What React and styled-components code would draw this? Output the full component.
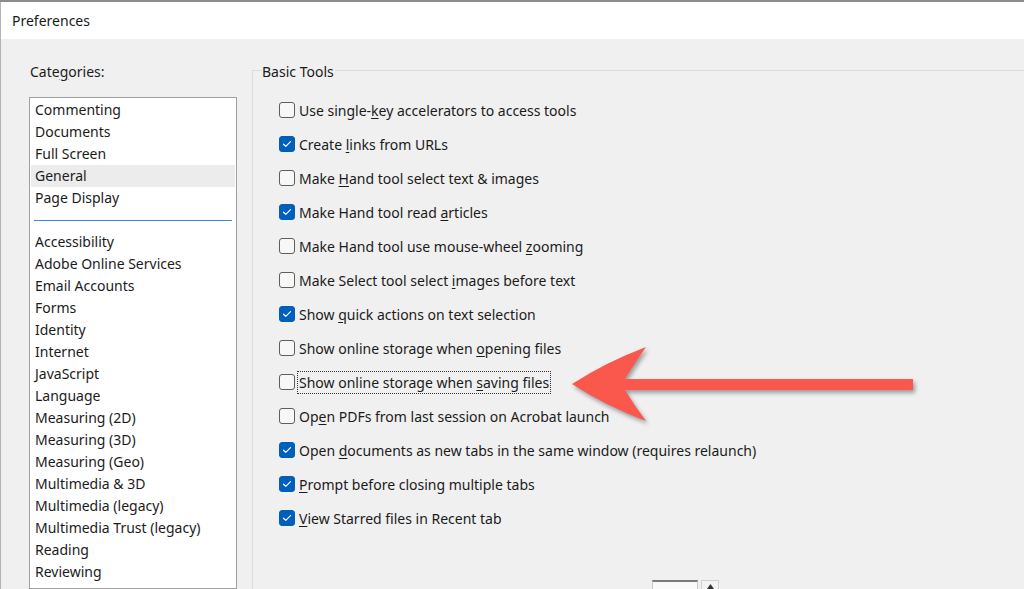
import { createGlobalStyle } from 'styled-components';
import styled from 'styled-components';

const GlobalStyle = createGlobalStyle`
  html, body {
    margin: 0;
    padding: 0;
    background: #f0f0f0;
  }
  body {
    font-family: "Noto Sans", "Open Sans", sans-serif;
    color: #1b1b1b;
  }
`;

const Window = styled.div`
  position: relative;
  width: 1024px;
  height: 589px;
  overflow: hidden;
  box-sizing: border-box;
  border-top: 2px solid #8c8c8c;
  box-shadow: inset 1px 0 0 #b4b4b4;
  background: #f0f0f0;
  display: flex;
  flex-direction: column;
`;

const TitleBar = styled.div`
  height: 37px;
  flex: none;
  background: #ffffff;
  display: flex;
  align-items: center;
  padding-left: 11px;
  margin-left: 1px;
  font-size: 14px;
  color: #1a1a1a;
`;

const Body = styled.div`
  flex: 1;
  display: flex;
  min-height: 0;
`;

const Sidebar = styled.div`
  width: 237px;
  flex: none;
  box-sizing: border-box;
  padding: 23px 0 0 29px;
  display: flex;
  flex-direction: column;
`;

const Caption = styled.div`
  font-size: 14px;
  height: 20px;
  line-height: 20px;
  padding-left: 1px;
  margin-bottom: 15px;
`;

const ListBox = styled.ul`
  list-style: none;
  margin: 0;
  padding: 1px 0 0 0;
  background: #ffffff;
  border: 1px solid #a0a0a0;
  flex: 1;
  overflow: hidden;
`;

const Item = styled.li`
  height: 22px;
  line-height: 22px;
  font-size: 14px;
  padding-left: 4px;
  margin: 0 1px;
  background: ${p => (p.$selected ? '#ececec' : 'transparent')};
  white-space: nowrap;
`;

const Divider = styled.li`
  height: 22px;
  display: flex;
  align-items: center;
  padding: 0 4px;
  &::after {
    content: '';
    flex: 1;
    height: 1px;
    background: #3a8ad8;
  }
`;

const Group = styled.fieldset`
  margin: 22px 0 0 15px;
  padding: 0;
  border: none;
  border-top: 1px solid #dcdcdc;
  border-left: 1px solid #dcdcdc;
  flex: 1;
  min-width: 0;
`;

const Legend = styled.legend`
  font-size: 14px;
  padding: 0 1px;
  margin-left: 8px;
  color: #1a1a1a;
  position: relative;
  top: 1px;
`;

const Options = styled.div`
  display: flex;
  flex-direction: column;
  padding: 13px 0 0 26px;
`;

const Row = styled.label`
  height: 34px;
  display: flex;
  align-items: center;
  gap: 3px;
  font-size: 14px;
  white-space: nowrap;
`;

const Box = styled.span`
  width: 16px;
  height: 16px;
  box-sizing: border-box;
  border-radius: 3px;
  flex: none;
  display: flex;
  align-items: center;
  justify-content: center;
  background: ${p => (p.$checked ? '#005fb8' : '#f7f7f7')};
  border: 1px solid ${p => (p.$checked ? '#005fb8' : '#5e5e5e')};
`;

const Text = styled.span`
  padding: 1px 1px;
  outline: ${p => (p.$focused ? '1px dotted #333' : 'none')};
  outline-offset: 0;
  line-height: 19px;
`;

const Key = styled.u`
  text-underline-offset: 2px;
`;

const BottomRow = styled.div`
  display: flex;
  align-items: flex-start;
  padding-top: 45px;
  padding-left: 399px;
  gap: 3px;
`;

const SpinField = styled.div`
  width: 44px;
  height: 20px;
  background: #fafafa;
  border: 1px solid #c8c8c8;
  border-top: 2px solid #7a7a7a;
`;

const SpinButton = styled.div`
  width: 18px;
  height: 20px;
  background: #f3f3f3;
  border: 1px solid #d0d0d0;
  display: flex;
  justify-content: center;
  padding-top: 3px;
  box-sizing: border-box;
`;

const Overlay = styled.svg`
  position: absolute;
  left: 0;
  top: 0;
  pointer-events: none;
  filter: drop-shadow(2px 3px 2px rgba(0, 0, 0, 0.35));
`;

const Check = () => (
  <svg width="10" height="8" viewBox="0 0 10 8">
    <path d="M1.5 4.2 L3.8 6.3 L8.5 1.6" fill="none" stroke="#fff" strokeWidth="1.2" strokeLinecap="round" strokeLinejoin="round" />
  </svg>
);

const top = ['Commenting', 'Documents', 'Full Screen', 'General', 'Page Display'];
const rest = [
  'Accessibility', 'Adobe Online Services', 'Email Accounts', 'Forms', 'Identity',
  'Internet', 'JavaScript', 'Language', 'Measuring (2D)', 'Measuring (3D)',
  'Measuring (Geo)', 'Multimedia & 3D', 'Multimedia (legacy)', 'Multimedia Trust (legacy)',
  'Reading', 'Reviewing', 'Search',
];

// [before, underlined, after, checked, focused]
const options = [
  ['Use single-', 'k', 'ey accelerators to access tools', false],
  ['Create ', 'l', 'inks from URLs', true],
  ['Make ', 'H', 'and tool select text & images', false],
  ['Make Hand tool read ', 'a', 'rticles', true],
  ['Make Hand tool use mouse-wheel ', 'z', 'ooming', false],
  ['Make Select tool select ', 'i', 'mages before text', false],
  ['Show ', 'q', 'uick actions on text selection', true],
  ['Show online storage when ', 'o', 'pening files', false],
  ['Show online storage when ', 's', 'aving files', false, true],
  ['Op', 'e', 'n PDFs from last session on Acrobat launch', false],
  ['Open ', 'd', 'ocuments as new tabs in the same window (requires relaunch)', true],
  ['', 'P', 'rompt before closing multiple tabs', true],
  ['', 'V', 'iew Starred files in Recent tab', true],
];

export default function App() {
  return (
    <>
      <GlobalStyle />
      <Window>
        <TitleBar>Preferences</TitleBar>
        <Body>
          <Sidebar>
            <Caption>Cate<Key>g</Key>ories:</Caption>
            <ListBox>
              {top.map(name => (
                <Item key={name} $selected={name === 'General'}>{name}</Item>
              ))}
              <Divider />
              {rest.map(name => (
                <Item key={name}>{name}</Item>
              ))}
            </ListBox>
          </Sidebar>
          <Group>
            <Legend>Basic Tools</Legend>
            <Options>
              {options.map(([a, k, b, checked, focused]) => (
                <Row key={a + k + b}>
                  <Box $checked={checked}>{checked && <Check />}</Box>
                  <Text $focused={focused}>{a}<Key>{k}</Key>{b}</Text>
                </Row>
              ))}
            </Options>
            <BottomRow>
              <SpinField />
              <SpinButton>
                <svg width="7" height="5" viewBox="0 0 7 5">
                  <path d="M0 5 L3.5 0 L7 5 Z" fill="#333" />
                </svg>
              </SpinButton>
            </BottomRow>
          </Group>
        </Body>
        <Overlay width="1024" height="589" viewBox="0 0 1024 589">
          <path
            d="M572 382 Q606 360 646 345 Q634 362 625 377 L913 377 L913 388 L625 388 Q634 403 646 419 Q606 404 572 382 Z"
            fill="#fa584c"
          />
        </Overlay>
      </Window>
    </>
  );
}
